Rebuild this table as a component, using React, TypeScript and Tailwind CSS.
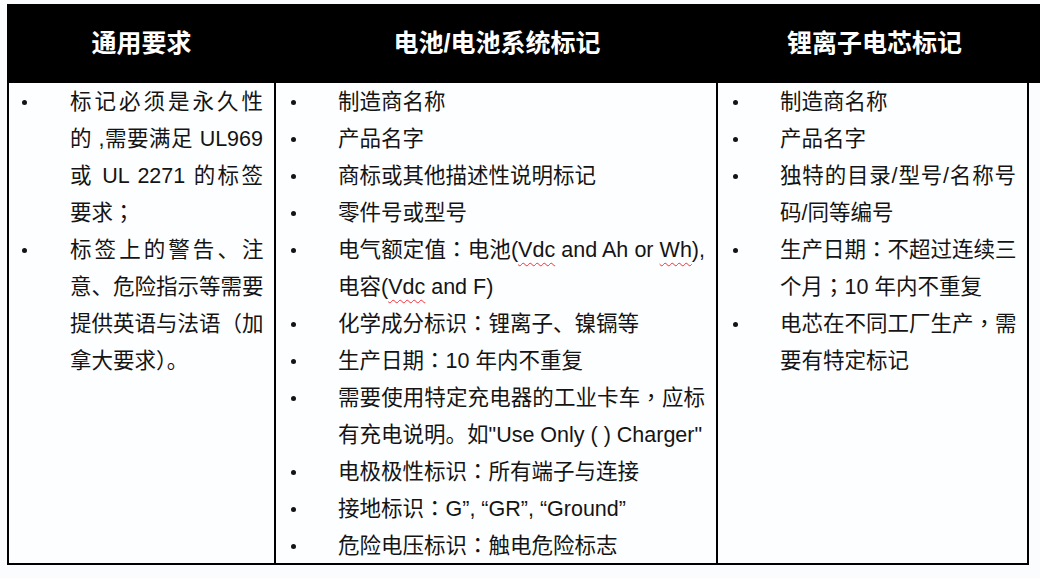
import React from 'react';

type Item = React.ReactNode[];

const Wavy = ({ children }: { children: React.ReactNode }) => (
  <span className="underline decoration-wavy decoration-red-500 decoration-1 underline-offset-[5px]">{children}</span>
);

// centered full-width punctuation, as in the original document
const fmt = (s: string) =>
  s.split(/([：；，])/).map((part, i) =>
    /^[：；，]$/.test(part) ? (
      <span key={i} className="leading-none" style={{ fontFamily: '"Noto Sans CJK TC", sans-serif' }}>
        {part}
      </span>
    ) : (
      <React.Fragment key={i}>{part}</React.Fragment>
    )
  );

const general: Item[] = [
  ['标记必须是永久性', '的 ,需要满足 UL969', '或 UL 2271 的标签', fmt('要求；')],
  ['标签上的警告、注', '意、危险指示等需要', '提供英语与法语（加', '拿大要求）。'],
];

const battery: Item[] = [
  ['制造商名称'],
  ['产品名字'],
  ['商标或其他描述性说明标记'],
  ['零件号或型号'],
  [
    <>{fmt('电气额定值：电池')}(<Wavy>Vdc</Wavy> and Ah or <Wavy>Wh</Wavy>),</>,
    <>电容(<Wavy>Vdc</Wavy> and F)</>,
  ],
  [fmt('化学成分标识：锂离子、镍镉等')],
  [fmt('生产日期：10 年内不重复')],
  [fmt('需要使用特定充电器的工业卡车，应标'), '有充电说明。如"Use Only ( ) Charger"'],
  [fmt('电极极性标识：所有端子与连接')],
  [fmt('接地标识：G”, “GR”, “Ground”')],
  [fmt('危险电压标识：触电危险标志')],
];

const cell: Item[] = [
  ['制造商名称'],
  ['产品名字'],
  ['独特的目录/型号/名称号', '码/同等编号'],
  [fmt('生产日期：不超过连续三'), fmt('个月；10 年内不重复')],
  [fmt('电芯在不同工厂生产，需'), '要有特定标记'],
];

const BulletList = ({ items, dotLeft, textLeft }: { items: Item[]; dotLeft: string; textLeft: string }) => (
  <div className="flex flex-col pt-px">
    {items.map((lines, i) => (
      <div key={i} className="flex">
        <div className={`${textLeft} shrink-0 h-[37px] flex items-center`}>
          <span className={`${dotLeft} w-[5px] h-[5px] rounded-full bg-[#141414]`} />
        </div>
        <div className="flex-1 pr-[11px]">
          {lines.map((line, j) => (
            <div
              key={j}
              className={`h-[37px] leading-[37px] whitespace-nowrap ${
                j < lines.length - 1 ? 'text-justify [text-align-last:justify]' : ''
              }`}
            >
              {line}
            </div>
          ))}
        </div>
      </div>
    ))}
  </div>
);

export default function App() {
  return (
    <div
      className="w-[1040px] min-h-[578px] bg-[#fbfcfe] pt-[4px] pl-[7px] text-[#141414]"
      style={{ fontFamily: '"Liberation Sans", "Noto Sans CJK SC", sans-serif' }}
    >
      <div className="grid grid-cols-[269px_442px_313px] h-[79px] bg-black items-center text-white font-bold text-[25px] text-center">
        <div>通用要求</div>
        <div>电池/电池系统标记</div>
        <div>锂离子电芯标记</div>
      </div>
      <div className="w-[1022px] h-[482px] grid grid-cols-[267px_442px_309px] border-x-2 border-b-2 border-black bg-[#fdfeff] text-[21.5px]">
        <div className="border-r-2 border-black">
          <BulletList items={general} dotLeft="ml-[13px]" textLeft="w-[61px]" />
        </div>
        <div className="border-r-2 border-black">
          <BulletList items={battery} dotLeft="ml-[15px]" textLeft="w-[62px]" />
        </div>
        <div>
          <BulletList items={cell} dotLeft="ml-[15px]" textLeft="w-[62px]" />
        </div>
      </div>
    </div>
  );
}
